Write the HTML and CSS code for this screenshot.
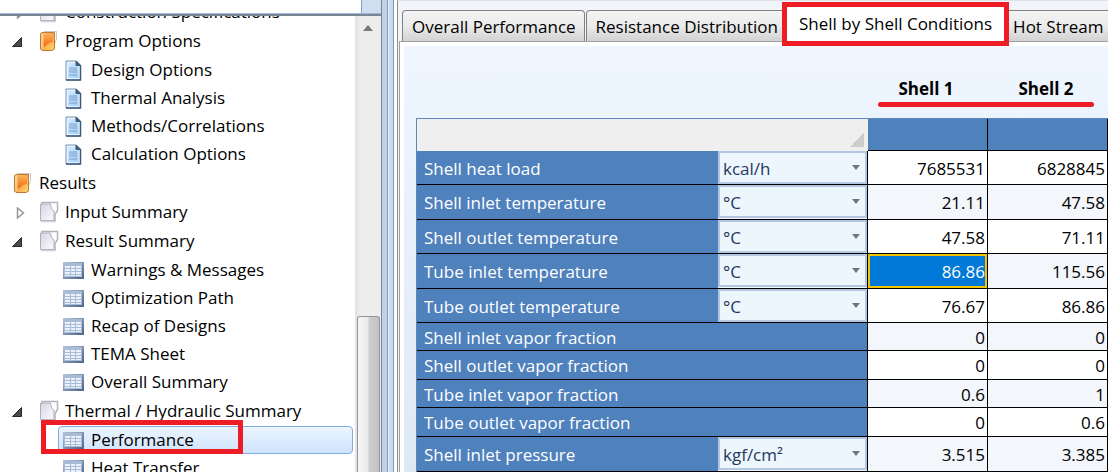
FILE: index.html
```html
<!DOCTYPE html>
<html lang="en">
<head>
    <meta charset="UTF-8" />
    <meta name="viewport" content="width=device-width, initial-scale=1.0"/>
    <title>Shell by Shell Conditions</title>
    <link rel="stylesheet" href="styles.css">
</head>
<body>

<!-- Icons -->
<svg class="defs" width="0" height="0" aria-hidden="true">
    <defs>
        <linearGradient id="gOrange" x1="0" y1="0" x2="1" y2="1">
            <stop offset="0" stop-color="#fbc98a"/>
            <stop offset="0.45" stop-color="#f8a548"/>
            <stop offset="1" stop-color="#ffd873"/>
        </linearGradient>
        <linearGradient id="gFlame" x1="0" y1="0" x2="0" y2="1">
            <stop offset="0" stop-color="#fbae58"/>
            <stop offset="1" stop-color="#f4690a"/>
        </linearGradient>
        <linearGradient id="gGray" x1="0" y1="0" x2="1" y2="1">
            <stop offset="0" stop-color="#d6d5e4"/>
            <stop offset="1" stop-color="#fbfbfd"/>
        </linearGradient>
        <linearGradient id="gDoc" x1="0" y1="0" x2="1" y2="1">
            <stop offset="0" stop-color="#d4ecff"/>
            <stop offset="1" stop-color="#9dcdf8"/>
        </linearGradient>
        <linearGradient id="gTable" x1="0" y1="0" x2="1" y2="1">
            <stop offset="0" stop-color="#b4c4db"/>
            <stop offset="1" stop-color="#4c6384"/>
        </linearGradient>
    </defs>
    <symbol id="book" viewBox="0 0 20 22">
        <path d="M5 1.500h12.500v8l-2 4V19H5z" fill="#fff" stroke="#c9c9c9"/>
        <path d="M1.500 3.500 3 2.500h12.500V19L13 20.500H3L1.500 19z" fill="url(#gOrange)" stroke="#c07a2c"/>
        <path d="M5 4h9v8l-4 1-5 4z" fill="url(#gFlame)"/>
        <path d="M3 4v15" stroke="#ffe3b8"/>
    </symbol>
    <symbol id="folder" viewBox="0 0 20 22">
        <path d="M3 1.500h15.500v8l-2.500 4V20H3z" fill="#fff" stroke="#b5b5b9" stroke-width="1.500"/>
        <path d="M1.500 3h10l1 5 2.500 2v9.500h-13.500z" fill="url(#gGray)" stroke="#aeadc4"/>
        <path d="M2 20.500h14" stroke="#cfcfd5" stroke-width="1.500"/>
    </symbol>
    <symbol id="doc" viewBox="0 0 17 21">
        <path d="M1 1h10.500l4 4v15H1z" fill="#e8f4ff" stroke="#7792b0"/>
        <path d="M3 3h8l2.500 3v12H3z" fill="url(#gDoc)"/>
        <path d="M15.500 5v15H1" fill="none" stroke="#3d5878" stroke-width="1.500"/>
        <path d="M11 1v4.500h4.500z" fill="#45617f" stroke="#3d5878"/>
        <path d="M4 8h8M4 10h8M4 12h8M4 15h8" stroke="#7f9dc6"/>
    </symbol>
    <symbol id="sheet" viewBox="0 0 21 17">
        <path d="M0 0h21v17H0z" fill="url(#gTable)"/>
        <path d="M1 1h18v14H1z" fill="#a9bbd5"/>
        <path d="M2 4h5v2H2zM8 4h4v2H8zM13 4h5v2h-5zM2 7h5v2H2zM8 7h4v2H8zM13 7h5v2h-5zM2 10h5v2H2zM8 10h4v2H8zM13 10h5v2h-5zM2 13h5v1H2zM8 13h4v1H8zM13 13h5v1h-5z" fill="#ebf2fb"/>
    </symbol>
    <symbol id="open" viewBox="0 0 10 10">
        <path d="M9.500.5v9H.5z" fill="#4a4a4a" stroke="#262626"/>
    </symbol>
    <symbol id="closed" viewBox="0 0 10 12">
        <path d="M1.500 1v10L7.500 6z" fill="#fff" stroke="#989898" stroke-width="1.500"/>
    </symbol>
</svg>

<div class="app">
    <aside class="side">
        <div class="side-top"><span></span></div>
        <div class="tree-box">
            <nav class="tree">
                <ul>
                    <li>
                        <div class="row"><button class="toggle" aria-label="Expand"><svg class="closed" width="10" height="12"><use href="#closed"/></svg></button><a class="item" href="#"><svg width="20" height="22"><use href="#folder"/></svg>Construction Specifications</a></div>
                    </li>
                    <li>
                        <div class="row"><button class="toggle" aria-label="Collapse"><svg width="10" height="10"><use href="#open"/></svg></button><a class="item" href="#"><svg width="20" height="22"><use href="#book"/></svg>Program Options</a></div>
                        <ul class="leaves">
                            <li><a class="item" href="#"><svg class="doc" width="17" height="21"><use href="#doc"/></svg>Design Options</a></li>
                            <li><a class="item" href="#"><svg class="doc" width="17" height="21"><use href="#doc"/></svg>Thermal Analysis</a></li>
                            <li><a class="item" href="#"><svg class="doc" width="17" height="21"><use href="#doc"/></svg>Methods/Correlations</a></li>
                            <li><a class="item" href="#"><svg class="doc" width="17" height="21"><use href="#doc"/></svg>Calculation Options</a></li>
                        </ul>
                    </li>
                </ul>
                <div class="row root"><a class="item" href="#"><svg width="20" height="22"><use href="#book"/></svg>Results</a></div>
                <ul>
                    <li>
                        <div class="row"><button class="toggle" aria-label="Expand"><svg class="closed" width="10" height="12"><use href="#closed"/></svg></button><a class="item" href="#"><svg width="20" height="22"><use href="#folder"/></svg>Input Summary</a></div>
                    </li>
                    <li>
                        <div class="row"><button class="toggle" aria-label="Collapse"><svg width="10" height="10"><use href="#open"/></svg></button><a class="item" href="#"><svg width="20" height="22"><use href="#folder"/></svg>Result Summary</a></div>
                        <ul class="leaves">
                            <li><a class="item" href="#"><svg width="21" height="17"><use href="#sheet"/></svg>Warnings &amp; Messages</a></li>
                            <li><a class="item" href="#"><svg width="21" height="17"><use href="#sheet"/></svg>Optimization Path</a></li>
                            <li><a class="item" href="#"><svg width="21" height="17"><use href="#sheet"/></svg>Recap of Designs</a></li>
                            <li><a class="item" href="#"><svg width="21" height="17"><use href="#sheet"/></svg>TEMA Sheet</a></li>
                            <li><a class="item" href="#"><svg width="21" height="17"><use href="#sheet"/></svg>Overall Summary</a></li>
                        </ul>
                    </li>
                    <li>
                        <div class="row"><button class="toggle" aria-label="Collapse"><svg width="10" height="10"><use href="#open"/></svg></button><a class="item" href="#"><svg width="20" height="22"><use href="#folder"/></svg>Thermal / Hydraulic Summary</a></div>
                        <ul class="leaves">
                            <li class="marked"><a class="item selected" href="#"><svg width="21" height="17"><use href="#sheet"/></svg>Performance</a></li>
                            <li><a class="item" href="#"><svg width="21" height="17"><use href="#sheet"/></svg>Heat Transfer</a></li>
                        </ul>
                    </li>
                </ul>
            </nav>
            <div class="scrollbar">
                <svg width="10" height="6" viewBox="0 0 10 6"><path d="M0 6 5 0l5 6z" fill="#777"/></svg>
                <div class="thumb"></div>
            </div>
        </div>
    </aside>

    <div class="splitter"></div>

    <main class="main">
        <div class="tabs">
            <button class="tab">Overall Performance</button>
            <button class="tab">Resistance Distribution</button>
            <button class="tab active">Shell by Shell Conditions</button>
            <button class="tab">Hot Stream Composition</button>
        </div>
        <section class="panel">
            <div class="shells">
                <b>Shell 1</b>
                <b>Shell 2</b>
            </div>
            <table class="grid">
                <colgroup><col><col class="unit"><col class="val"><col class="val"></colgroup>
                <thead>
                <tr><td class="corner" colspan="2"></td><td></td><td></td></tr>
                </thead>
                <tbody>
                <tr>
                    <th id="r1">Shell heat load</th>
                    <td class="unit"><div><select aria-labelledby="r1"><option>kcal/h</option></select></div></td>
                    <td>7685531</td><td>6828845</td>
                </tr>
                <tr>
                    <th id="r2">Shell inlet temperature</th>
                    <td class="unit"><div><select aria-labelledby="r2"><option>°C</option></select></div></td>
                    <td>21.11</td><td>47.58</td>
                </tr>
                <tr>
                    <th id="r3">Shell outlet temperature</th>
                    <td class="unit"><div><select aria-labelledby="r3"><option>°C</option></select></div></td>
                    <td>47.58</td><td>71.11</td>
                </tr>
                <tr>
                    <th id="r4">Tube inlet temperature</th>
                    <td class="unit"><div><select aria-labelledby="r4"><option>°C</option></select></div></td>
                    <td class="current">86.86</td><td>115.56</td>
                </tr>
                <tr>
                    <th id="r5">Tube outlet temperature</th>
                    <td class="unit"><div><select aria-labelledby="r5"><option>°C</option></select></div></td>
                    <td>76.67</td><td>86.86</td>
                </tr>
                <tr class="plain"><th colspan="2">Shell inlet vapor fraction</th><td>0</td><td>0</td></tr>
                <tr class="plain"><th colspan="2">Shell outlet vapor fraction</th><td>0</td><td>0</td></tr>
                <tr class="plain"><th colspan="2">Tube inlet vapor fraction</th><td>0.6</td><td>1</td></tr>
                <tr class="plain"><th colspan="2">Tube outlet vapor fraction</th><td>0</td><td>0.6</td></tr>
                <tr>
                    <th id="r10">Shell inlet pressure</th>
                    <td class="unit"><div><select aria-labelledby="r10"><option>kgf/cm²</option></select></div></td>
                    <td>3.515</td><td>3.385</td>
                </tr>
                </tbody>
            </table>
        </section>
    </main>
</div>
</body>
</html>
```
FILE: styles.css
```css
*, *::before, *::after {
    box-sizing: border-box;
}

body {
    margin: 0;
    font-family: "Open Sans", "Noto Sans", sans-serif;
    font-size: 17px;
    line-height: 24px;
    color: #000;
}

button, select {
    font: inherit;
}

.defs {
    position: absolute;
}

.app {
    display: flex;
    height: 100vh;
    overflow: hidden;
}

/* Left side */
.side {
    flex: none;
    width: 382px;
    display: flex;
    flex-direction: column;
    background: #fff;
    border-right: 1px solid #7c8391;
}

.side-top {
    flex: none;
    display: flex;
    justify-content: flex-end;
    height: 16px;
    border-bottom: 2px solid #7d8492;
    box-shadow: inset 0 -1px #9db8dc;
}

.side-top span {
    width: 20px;
    height: 13px;
    background: #cfdff0;
    border-left: 1px solid #7f9ec9;
}

.tree-box {
    flex: 1;
    min-height: 0;
    display: flex;
    overflow: hidden;
}

.tree {
    flex: 1;
    min-width: 0;
    margin-top: -18px;
    padding-right: 2px;
    white-space: nowrap;
}

.tree ul {
    list-style: none;
    margin: 0;
    padding: 0;
}

.tree .leaves {
    padding: 0 0 1px 58px;
}

.row {
    display: flex;
    height: 29px;
    padding-left: 12px;
}

.row.root {
    padding-left: 6px;
}

.toggle {
    flex: none;
    display: flex;
    align-items: center;
    width: 20px;
    padding: 0;
    border: none;
    background: none;
}

.toggle .closed {
    margin-left: 4px;
}

.item {
    flex: 1;
    display: flex;
    align-items: center;
    height: 28px;
    padding-left: 6px;
    border: 1px solid transparent;
    border-radius: 4px;
    color: #000;
    text-decoration: none;
}

.item svg {
    flex: none;
    margin-right: 6px;
}

.leaves .item {
    padding-left: 4px;
}

.leaves .item svg {
    margin-right: 7px;
}

.leaves .item .doc {
    margin: 0 9px 0 2px;
}

.item.selected {
    background: linear-gradient(#ebf4fe, #cfe4fe);
    border-color: #84acdd;
}

.marked {
    position: relative;
}

.marked::after {
    content: "";
    position: absolute;
    left: -17px;
    top: -6px;
    width: 202px;
    height: 34px;
    border: 5px solid #ee1c25;
}

.scrollbar {
    flex: none;
    width: 26px;
    display: flex;
    flex-direction: column;
    align-items: center;
    justify-content: space-between;
    padding-top: 9px;
    background: linear-gradient(90deg, #e2e2e2, #ededed 20%);
}

.thumb {
    width: 23px;
    height: 35%;
    border: 1px solid #959595;
    border-bottom: none;
    border-radius: 3px 3px 0 0;
    background: linear-gradient(90deg, #f7f7f7, #e9e9eb 45%, #cdcdd0 55%, #c2c2c5);
}

.splitter {
    flex: none;
    width: 15px;
    background: linear-gradient(90deg, #bdd3ea 5px, #8796a8 5px, #8796a8 6px, #eef5fc 6px, #eef5fc 7px, #c5dbf3 7px, #c5dbf3 11px, #8796a8 11px, #8796a8 12px, #fff 12px);
}

/* Right side */
.main {
    flex: 1;
    min-width: 0;
    display: flex;
    flex-direction: column;
    background: #f1f5f9;
    border-left: 1px solid #8c8c8c;
    border-top: 1px solid #dde2e8;
}

.tabs {
    display: flex;
    gap: 1px;
    height: 40px;
    padding: 9px 0 0 4px;
}

.tab {
    flex: none;
    padding: 2px 8px 0 9px;
    border: 1px solid #808080;
    border-bottom: none;
    border-radius: 4px 4px 0 0;
    background: linear-gradient(#f4f4f4, #ebebeb 50%, #d2d2d2);
    color: #000;
    white-space: nowrap;
}

.tab.active {
    position: relative;
    height: 44px;
    margin: -8px 0 0 -6px;
    padding: 0 12px;
    border: 5px solid #ee1c25;
    border-radius: 0;
    background: #fff;
}

.tab:last-child {
    margin-left: -2px;
    padding-left: 4px;
    border-radius: 0;
}

.panel {
    flex: 1;
    min-height: 0;
    margin-left: 1px;
    padding-left: 16px;
    border: 1px solid #a0a0a0;
    border-width: 1px 0 0 1px;
    box-shadow: inset 4px 4px #fff;
    background: linear-gradient(#eff6ff, #e8f1fa 40%, #dfe9f4);
}

.shells {
    position: relative;
    display: flex;
    justify-content: flex-end;
    height: 76px;
    padding: 35px 2px 0 0;
    text-align: center;
}

.shells b {
    width: 120px;
}

/* underline below the shell names */
.shells::after {
    content: "";
    position: absolute;
    right: 14px;
    top: 60px;
    width: 216px;
    height: 5px;
    border-radius: 3px;
    background: #ee1c25;
}

.grid {
    width: 100%;
    table-layout: fixed;
    border-collapse: separate;
    border-spacing: 0;
    border-top: 1px solid #5b88bb;
    border-left: 1px solid #5b88bb;
}

col.unit {
    width: 150px;
}

col.val {
    width: 120px;
}

.grid th, .grid td {
    height: 34px;
    padding: 2px 2px 0 7px;
    border-right: 1px solid #000;
    border-bottom: 1px solid #000;
}

.grid tr:nth-child(even) > * {
    height: 35px;
}

.grid tr.plain > * {
    height: 28px;
}

.grid tr.plain:nth-child(odd) > * {
    height: 29px;
}

.grid thead td {
    height: 32px;
    background: #4f81bd;
}

.grid thead .corner {
    border-color: #efefef;
    background: linear-gradient(135deg, transparent 50%, #cdcdcd 50%) right 3px bottom 3px / 14px 14px no-repeat #efefef;
}

.grid th {
    background: #4f81bd;
    color: #fff;
    font-weight: 400;
    text-align: left;
}

.grid th:not([colspan]) {
    border-right: none;
}

.grid td {
    background: #fff;
    text-align: right;
}

.grid tbody tr:nth-child(even) td {
    background: #f3f6fa;
}

.grid td.unit {
    padding: 0;
}

.unit div {
    position: relative;
    height: 100%;
}

.unit div::after {
    content: "";
    position: absolute;
    right: 7px;
    top: 14px;
    border: 4px solid transparent;
    border-top: 5px solid #6f7780;
    border-bottom: none;
    pointer-events: none;
}

.unit select {
    display: block;
    width: 100%;
    height: 33px;
    padding: 2px 3px 0;
    appearance: none;
    border: 2px solid #b3c7e3;
    border-radius: 0;
    background: #edf5fd;
    color: #1f3a5f;
}

.grid tbody tr td.current {
    background: #0078d7;
    color: #fff;
    box-shadow: inset 0 0 0 2px #f5c400;
}
```
